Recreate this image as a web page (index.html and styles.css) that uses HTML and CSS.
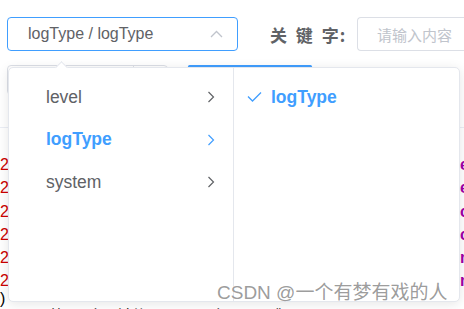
FILE: index.html
```html
<!DOCTYPE html>
<html lang="zh-CN">
<head>
    <meta charset="UTF-8">
    <meta name="viewport" content="width=device-width, initial-scale=1.0">
    <title>日志查询</title>
    <link rel="stylesheet" href="styles.css">
</head>
<body>
    <div class="page">
        <div class="toolbar">
            <div class="select is-focus">
                <span class="select-value">logType / logType</span>
                <svg class="select-arrow" width="13" height="8" viewBox="0 0 13 8"><polyline points="1,7 6.5,1.5 12,7" fill="none" stroke="#c0c4cc" stroke-width="1.3"/></svg>
            </div>
            <label class="keyword-label">关 键 字:</label>
            <div class="input"><span class="placeholder">请输入内容</span></div>
        </div>

        <div class="actions">
            <div class="btn-group">
                <span class="btn"></span>
                <span class="btn small"></span>
            </div>
            <div class="tab-active"></div>
        </div>

        <div class="table">
            <div class="table-head"></div>
            <div class="row"><span class="time">2022-07-14 10:21:05</span><span class="level">error</span></div>
            <div class="row"><span class="time">2022-07-14 10:21:02</span><span class="level">error</span></div>
            <div class="row"><span class="time">2022-07-14 10:20:48</span><span class="level">crit</span></div>
            <div class="row"><span class="time">2022-07-14 10:20:31</span><span class="level">crit</span></div>
            <div class="row"><span class="time">2022-07-14 10:20:17</span><span class="level">notice</span></div>
            <div class="row"><span class="time">2022-07-14 10:20:02</span><span class="level">notice</span></div>
            <div class="row plain"><span class="note">)</span></div>
            <div class="row plain"><span class="footer-text">共 84 条 &nbsp; 前往 1 页 &nbsp;&nbsp; 10条/页 &nbsp;&nbsp;&nbsp; 跳</span></div>
        </div>
    </div>

    <!-- cascader dropdown -->
    <div class="cascader-panel">
        <span class="popper-arrow"></span>
        <ul class="menu">
            <li class="node">
                <span class="node-label">level</span>
                <svg class="node-arrow" width="8" height="12" viewBox="0 0 8 12"><polyline points="1.5,1 6.5,6 1.5,11" fill="none" stroke="#606266" stroke-width="1.2"/></svg>
            </li>
            <li class="node active">
                <span class="node-label">logType</span>
                <svg class="node-arrow" width="8" height="12" viewBox="0 0 8 12"><polyline points="1.5,1 6.5,6 1.5,11" fill="none" stroke="#409eff" stroke-width="1.2"/></svg>
            </li>
            <li class="node">
                <span class="node-label">system</span>
                <svg class="node-arrow" width="8" height="12" viewBox="0 0 8 12"><polyline points="1.5,1 6.5,6 1.5,11" fill="none" stroke="#606266" stroke-width="1.2"/></svg>
            </li>
        </ul>
        <ul class="menu menu-sub">
            <li class="node active checked">
                <svg class="node-check" width="15" height="11" viewBox="0 0 15 11"><polyline points="1,5.5 5.5,10 14,1.5" fill="none" stroke="#409eff" stroke-width="1.3"/></svg>
                <span class="node-label">logType</span>
            </li>
        </ul>
    </div>

    <div class="watermark">CSDN @一个有梦有戏的人</div>
</body>
</html>
```

FILE: styles.css
```css
/* Basic Resets */
* {
    margin: 0;
    padding: 0;
    box-sizing: border-box;
}

html {
    overflow: hidden;
}

body {
    font-family: "Liberation Sans", Arial, "Noto Sans CJK SC", sans-serif;
    background: #fff;
    color: #606266;
    width: 464px;
    height: 309px;
    overflow: hidden;
    position: relative;
}

ul {
    list-style: none;
}

/* top search bar */
.toolbar {
    display: flex;
    align-items: center;
    padding: 17px 0 0 7px;
}

.select {
    width: 231px;
    height: 34px;
    border: 1px solid #dcdfe6;
    border-radius: 4px;
    display: flex;
    align-items: center;
    justify-content: space-between;
    padding: 0 14px 0 20px;
}

.select.is-focus {
    border-color: #409eff;
}

.select-value {
    font-size: 16px;
    color: #606266;
}

.keyword-label {
    font-size: 17px;
    font-weight: bold;
    color: #606266;
    margin-left: 32px;
    width: 87px;
    letter-spacing: 1px;
    word-spacing: 3px;
    font-family: "Noto Sans CJK SC", sans-serif;
}

.input {
    flex: 1;
    height: 34px;
    border: 1px solid #dcdfe6;
    border-right: 0;
    border-radius: 4px 0 0 4px;
    display: flex;
    align-items: center;
    padding-left: 19px;
}

.placeholder {
    font-size: 15px;
    color: #c0c4cc;
    font-family: "Noto Sans CJK SC", sans-serif;
}

/* content hidden behind the dropdown */
.actions {
    display: flex;
    align-items: flex-start;
    padding: 14px 0 0 7px;
    height: 76px;
}

.btn-group {
    display: flex;
    width: 161px;
    height: 30px;
    border: 1px solid #dcdfe6;
    border-radius: 4px;
}

.btn {
    flex: 1;
    border-right: 1px solid #dcdfe6;
}

.btn.small {
    flex: 0 0 33px;
    border-right: 0;
}

.tab-active {
    width: 124px;
    height: 3px;
    margin: 0 0 0 20px;
    background: #409eff;
    border-radius: 2px;
}

.table-head {
    height: 0;
    border-bottom: 1px solid #ebeef5;
    margin-bottom: 25px;
}

.row {
    display: grid;
    grid-template-columns: 460px 1fr;
    height: 23.3px;
    font-size: 16px;
    line-height: 23px;
    white-space: nowrap;
    overflow: hidden;
}

.row .time {
    color: #cc0000;
}

.row .level {
    color: #a100a8;
    font-weight: bold;
}

.row.plain {
    display: block;
    color: #000;
    height: 12px;
    line-height: 12px;
    overflow: visible;
}

.footer-text {
    display: block;
    padding-left: 48px;
    font-family: "Noto Sans CJK SC", sans-serif;
    margin-top: 4px;
}

/* cascader dropdown */
.cascader-panel {
    position: absolute;
    top: 67px;
    left: 8px;
    width: 452px;
    height: 235px;
    display: flex;
    background: #fff;
    border: 1px solid #e4e7ed;
    border-radius: 5px;
    box-shadow: 0 2px 12px rgba(0, 0, 0, 0.1);
}

.popper-arrow {
    position: absolute;
    top: -5px;
    left: 48px;
    width: 9px;
    height: 9px;
    background: #fff;
    border-top: 1px solid #e4e7ed;
    border-left: 1px solid #e4e7ed;
    transform: rotate(45deg);
}

.menu {
    width: 225px;
    padding: 8px 0;
    border-right: 1px solid #e4e7ed;
}

.menu-sub {
    flex: 1;
    border-right: 0;
}

.node {
    position: relative;
    display: flex;
    align-items: center;
    height: 42.5px;
    padding: 0 18px 0 37px;
    font-size: 17.5px;
    color: #606266;
}

.node-label {
    flex: 1;
}

.node.active {
    color: #409eff;
    font-weight: bold;
}

.node-check {
    position: absolute;
    left: 13px;
    top: 15px;
}

/* watermark over the screenshot */
.watermark {
    position: absolute;
    left: 217px;
    top: 277px;
    font-size: 19px;
    color: rgba(130, 130, 130, 0.8);
    font-family: "Liberation Sans", "Noto Sans CJK SC", sans-serif;
    text-shadow: 0 0 1px #fff;
    white-space: nowrap;
}
```
